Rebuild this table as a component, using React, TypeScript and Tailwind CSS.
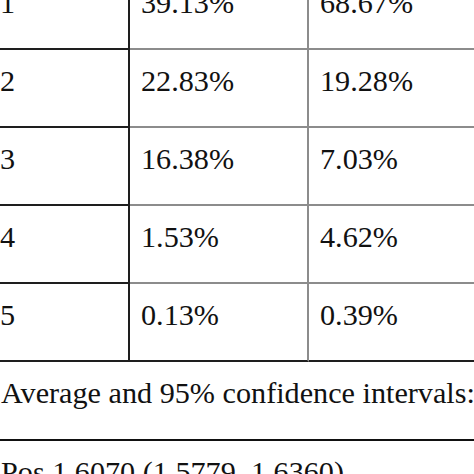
const rows = [
  ["1", "39.13%", "68.67%"],
  ["2", "22.83%", "19.28%"],
  ["3", "16.38%", "7.03%"],
  ["4", "1.53%", "4.62%"],
  ["5", "0.13%", "0.39%"],
];

export default function App() {
  return (
    <div
      className="w-[474px] h-[474px] overflow-hidden bg-white text-[#111] text-[30.2px] leading-[30px]"
      style={{ fontFamily: '"Liberation Serif", "Times New Roman", serif' }}
    >
      <div className="-mt-[28px]">
        {rows.map((r, i) => {
          const last = i === rows.length - 1;
          const lightBorder = last ? "border-b-[#1e1e1e]" : "border-b-[#8c8c8c]";
          return (
            <div key={r[0]} className="flex h-[78px]">
              <div className="w-[130px] shrink-0 pt-[16px] border-r-2 border-b-2 border-r-[#1e1e1e] border-b-[#1e1e1e]">
                {r[0]}
              </div>
              <div
                className={`w-[179px] shrink-0 pt-[16px] pl-[11px] border-r-2 border-b-2 border-r-[#8c8c8c] ${lightBorder}`}
              >
                {r[1]}
              </div>
              <div className={`flex-1 pt-[16px] pl-[11px] border-b-2 ${lightBorder}`}>
                {r[2]}
              </div>
            </div>
          );
        })}
        <div className="h-[79px] pt-[16px] pl-[1px] border-b-2 border-b-[#111] whitespace-nowrap">
          Average and 95% confidence intervals:
        </div>
        <div className="pt-[16px] pl-[1px] whitespace-nowrap">
          Pos 1.6070 (1.5779, 1.6360)
        </div>
      </div>
    </div>
  );
}
